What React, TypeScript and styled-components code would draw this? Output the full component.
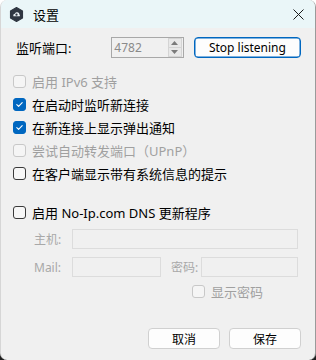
import React, { useState } from 'react';
import styled, { createGlobalStyle, css } from 'styled-components';

const GlobalStyle = createGlobalStyle`
  html, body {
    margin: 0;
    padding: 0;
    background: linear-gradient(#ffffff 50%, #1e1e1e 50%);
  }
  * { box-sizing: border-box; }
`;

const FONT = `"Noto Sans", "Noto Sans CJK SC", sans-serif`;

const Window = styled.div`
  width: 316px;
  height: 360px;
  display: flex;
  flex-direction: column;
  background: #f0f0f0;
  border-right: 1px solid #9a9a9a;
  border-left: 1px solid #d6d6d6;
  border-radius: 7px;
  overflow: hidden;
  font-family: ${FONT};
  font-size: 13px;
  color: #000;
`;

const TitleBar = styled.div`
  height: 28px;
  flex: none;
  display: flex;
  align-items: center;
  padding: 0 0 0 8px;
  background: #eaf6f8;
`;

const TitleText = styled.span`
  margin-left: 9px;
  font-size: 13px;
  flex: 1;
`;

const CloseBtn = styled.div`
  width: 34px;
  height: 28px;
  display: flex;
  align-items: center;
  justify-content: center;
`;

const Body = styled.div`
  flex: 1;
  display: flex;
  flex-direction: column;
  padding: 8px 14px 11px 12px;
`;

const PortRow = styled.div`
  display: flex;
  align-items: center;
  height: 22px;
  margin-bottom: 16px;
`;

const PortLabel = styled.span`
  width: 99px;
  padding-left: 3px;
`;

const SpinBox = styled.div`
  width: 73px;
  height: 21px;
  border: 1px solid #a8a8a8;
  background: #f0f0f0;
  display: flex;
  align-items: center;
`;

const SpinValue = styled.span`
  flex: 1;
  padding-left: 2px;
  color: #8a8a8a;
  font-size: 12px;
`;

const SpinArrows = styled.div`
  width: 14px;
  height: 19px;
  display: flex;
  flex-direction: column;
  margin-right: 1px;
`;

const SpinArrow = styled.div<{ $down?: boolean }>`
  flex: 1;
  display: flex;
  align-items: center;
  justify-content: center;
  background: #e8e8e8;
  border: 1px solid #d4d4d4;
  ${(p) => p.$down && css`border-top: none;`}
`;

const PushButton = styled.button<{ $primary?: boolean; $width?: number }>`
  width: ${(p) => p.$width ?? 72}px;
  height: 21px;
  padding: 0;
  font-family: ${FONT};
  font-size: 12px;
  color: #000;
  background: #fdfdfd;
  border: 1px solid ${(p) => (p.$primary ? '#0067c0' : '#d0d0d0')};
  ${(p) => p.$primary && css`box-shadow: inset 0 0 0 0.5px #0067c0;`}
  border-radius: 4px;
  display: flex;
  align-items: center;
  justify-content: center;
`;

const CheckList = styled.div<{ $top?: number }>`
  display: flex;
  flex-direction: column;
  gap: 9px;
  margin-top: ${(p) => p.$top ?? 0}px;
`;

const CheckRow = styled.label<{ $disabled?: boolean; $indent?: number }>`
  display: flex;
  align-items: center;
  height: 14px;
  margin-left: ${(p) => p.$indent ?? 0}px;
  color: ${(p) => (p.$disabled ? '#a0a0a0' : '#000')};
`;

const Box = styled.span<{ $checked?: boolean; $disabled?: boolean }>`
  width: 13px;
  height: 13px;
  flex: none;
  margin-right: 6px;
  border-radius: 3px;
  display: flex;
  align-items: center;
  justify-content: center;
  border: 1px solid ${(p) => (p.$checked ? '#0067c0' : p.$disabled ? '#c8c8c8' : '#3a3a3a')};
  background: ${(p) => (p.$checked ? '#0067c0' : p.$disabled ? '#f5f5f5' : '#f7f7f7')};
`;

const Divider = styled.div`
  height: 7px;
`;

const FieldGrid = styled.div`
  display: grid;
  grid-template-columns: 38px 89px 40px 97px;
  row-gap: 8px;
  margin: 10px 0 0 21px;
  align-items: center;
`;

const FieldLabel = styled.span<{ $pad?: number }>`
  color: #a8a8a8;
  font-size: 12px;
  padding-left: ${(p) => p.$pad ?? 0}px;
`;

const FieldInput = styled.div<{ $span?: number }>`
  height: 20px;
  border: 1px solid #dcdcdc;
  background: #f0f0f0;
  grid-column: span ${(p) => p.$span ?? 1};
`;

const Footer = styled.div`
  margin-top: auto;
  display: flex;
  justify-content: flex-end;
  gap: 9px;
`;

function Check({ checked, disabled, label, indent }: { checked?: boolean; disabled?: boolean; label: string; indent?: number }) {
  const [on, setOn] = useState(!!checked);
  return (
    <CheckRow $disabled={disabled} $indent={indent} onClick={() => !disabled && setOn(!on)}>
      <Box $checked={on} $disabled={disabled}>
        {on && (
          <svg width="9" height="9" viewBox="0 0 9 9">
            <path d="M1.8 4.7 L3.6 6.4 L7.2 2.6" fill="none" stroke="#fff" strokeWidth="1.1" strokeLinecap="round" strokeLinejoin="round" />
          </svg>
        )}
      </Box>
      {label}
    </CheckRow>
  );
}

export default function App() {
  return (
    <>
      <GlobalStyle />
      <Window>
        <TitleBar>
          <svg width="15" height="15" viewBox="0 0 16 16">
            <path d="M8 0.6 L14.4 4.3 V11.7 L8 15.4 L1.6 11.7 V4.3 Z" fill="#2f3742" stroke="#2f3742" strokeWidth="1.2" strokeLinejoin="round" />
            <path d="M4.6 9.8 Q4 7.4 6.2 7.1 Q6.8 5 9 5.6 Q11.3 5.9 11.1 8 Q12.2 8.6 11.4 9.8 Z" fill="#e8eef2" />
            <circle cx="8" cy="8.2" r="1.2" fill="#2f3742" />
          </svg>
          <TitleText>设置</TitleText>
          <CloseBtn>
            <svg width="11" height="11" viewBox="0 0 11 11">
              <path d="M0.5 0.5 L10.5 10.5 M10.5 0.5 L0.5 10.5" stroke="#1a1a1a" strokeWidth="1" />
            </svg>
          </CloseBtn>
        </TitleBar>
        <Body>
          <PortRow>
            <PortLabel>监听端口:</PortLabel>
            <SpinBox>
              <SpinValue>4782</SpinValue>
              <SpinArrows>
                <SpinArrow>
                  <svg width="7" height="4" viewBox="0 0 7 4"><path d="M0 4 L3.5 0 L7 4 Z" fill="#7a7a7a" /></svg>
                </SpinArrow>
                <SpinArrow $down>
                  <svg width="7" height="4" viewBox="0 0 7 4"><path d="M0 0 L3.5 4 L7 0 Z" fill="#7a7a7a" /></svg>
                </SpinArrow>
              </SpinArrows>
            </SpinBox>
            <PushButton $primary $width={108} style={{ marginLeft: 10 }}>Stop listening</PushButton>
          </PortRow>
          <CheckList>
            <Check disabled label="启用 IPv6 支持" />
            <Check checked label="在启动时监听新连接" />
            <Check checked label="在新连接上显示弹出通知" />
            <Check disabled label="尝试自动转发端口（UPnP）" />
            <Check label="在客户端显示带有系统信息的提示" />
            <Divider />
            <Check label="启用 No-Ip.com DNS 更新程序" />
          </CheckList>
          <FieldGrid>
            <FieldLabel>主机:</FieldLabel>
            <FieldInput $span={3} />
            <FieldLabel>Mail:</FieldLabel>
            <FieldInput />
            <FieldLabel $pad={10}>密码:</FieldLabel>
            <FieldInput />
          </FieldGrid>
          <CheckList $top={7}>
            <Check disabled label="显示密码" indent={179} />
          </CheckList>
          <Footer>
            <PushButton>取消</PushButton>
            <PushButton>保存</PushButton>
          </Footer>
        </Body>
      </Window>
    </>
  );
}
